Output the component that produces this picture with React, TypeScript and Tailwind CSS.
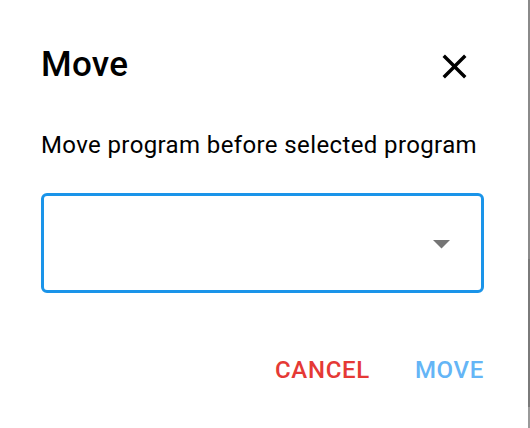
import React from 'react';

function CloseIcon() {
  return (
    <svg viewBox="0 0 24 24" className="w-[41px] h-[41px]" fill="currentColor">
      <path d="M19 6.41L17.59 5 12 10.59 6.41 5 5 6.41 10.59 12 5 17.59 6.41 19 12 13.41 17.59 19 19 17.59 13.41 12z" />
    </svg>
  );
}

export default function App() {
  return (
    <div className="flex w-[530px] h-[428px] bg-white" style={{ fontFamily: 'Roboto, "Liberation Sans", sans-serif' }}>
      {/* dialog */}
      <div className="flex-1 flex flex-col pl-[41px] pr-[44px] pt-[45px] bg-white rounded-br-[4px]">
        <div className="flex items-center justify-between h-[40px]">
          <h2 className="text-[35px] leading-[40px] font-medium tracking-[0.3px] text-black">Move</h2>
          <button className="mr-[9px] mt-[2px] text-black">
            <CloseIcon />
          </button>
        </div>

        <p className="mt-[44px] text-[24px] leading-[32px] tracking-[0.38px] text-black">
          Move program before selected program
        </p>

        <div className="mt-[32px] h-[100px] border-[3px] border-[#1a94e9] rounded-[6px] flex items-center justify-end pr-[31px]">
          <svg viewBox="0 0 17 9" className="w-[17px] h-[9px] mt-[2px]" fill="#757575">
            <polygon points="0,0 17,0 8.5,8.5" />
          </svg>
        </div>

        <div className="mt-[61px] flex justify-end items-center gap-[45px]">
          <button className="text-[24px] leading-[32px] font-medium uppercase tracking-[0.02857em] text-[#e53935]">
            Cancel
          </button>
          <button className="text-[24px] leading-[32px] font-medium uppercase tracking-[0.02857em] text-[#64b5f6]">
            Move
          </button>
        </div>
      </div>

      {/* backdrop edge */}
      <div className="w-[2px] flex flex-col">
        <div className="h-[259px] bg-[#8a8a8a]" />
        <div className="h-[148px] bg-[#7a7a7a]" />
        <div className="flex-1 bg-[#9a9a9a]" />
      </div>
    </div>
  );
}
